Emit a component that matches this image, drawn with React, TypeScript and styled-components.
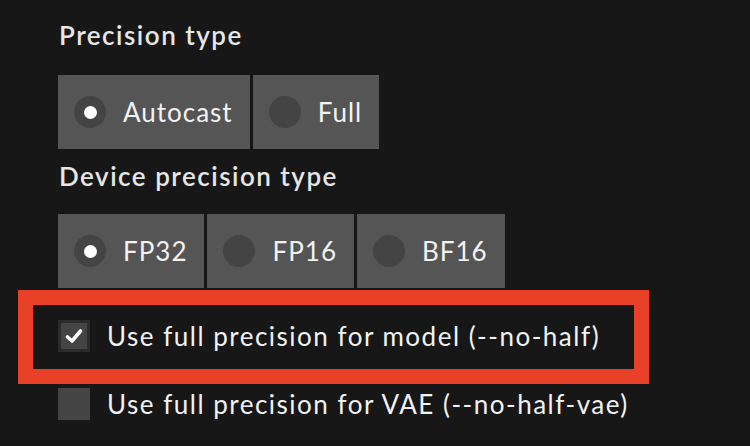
import React, { useState } from 'react';
import styled, { createGlobalStyle } from 'styled-components';

const GlobalStyle = createGlobalStyle`
  html, body {
    margin: 0;
    padding: 0;
    background: #171717;
  }
  body {
    font-family: 'Lato', 'Noto Sans', sans-serif;
    color: #eeeeee;
  }
`;

const Page = styled.div`
  width: 750px;
  height: 446px;
  box-sizing: border-box;
  padding: 17px 0 0 58px;
  overflow: hidden;
`;

const Heading = styled.h3<{ $first?: boolean }>`
  margin: ${p => (p.$first ? '0 0 22px' : '9px 0 20px')} 1px;
  font-size: 26px;
  line-height: 36px;
  font-weight: 600;
  letter-spacing: 1.5px;
  color: #e6e6e6;
`;

const Group = styled.div`
  display: flex;
  gap: 3px;
`;

const Option = styled.label`
  display: flex;
  align-items: center;
  gap: 17px;
  height: 74px;
  padding: 0 17px 0 16px;
  background: #555555;
  font-size: 26px;
  letter-spacing: 1px;
  color: #f2f2f2;
  cursor: pointer;
`;

const Radio = styled.span<{ $checked: boolean }>`
  position: relative;
  width: 32px;
  height: 32px;
  border-radius: 50%;
  background: #444444;
  flex-shrink: 0;

  &::after {
    content: '';
    display: ${p => (p.$checked ? 'block' : 'none')};
    position: absolute;
    top: 9.5px;
    left: 9.5px;
    width: 13px;
    height: 13px;
    border-radius: 50%;
    background: #ffffff;
  }
`;

const Highlight = styled.div`
  width: 631px;
  box-sizing: border-box;
  margin: 2px 0 0 -40px;
  padding: 15px 0 17px 25px;
  border: 15px solid #e84128;
`;

const CheckRow = styled.label<{ $indent?: boolean }>`
  display: flex;
  align-items: center;
  gap: 17px;
  height: 32px;
  margin-top: ${p => (p.$indent ? '4px' : '0')};
  font-size: 26px;
  letter-spacing: 1.5px;
  color: #f2f2f2;
  cursor: pointer;
`;

const Box = styled.span<{ $checked: boolean }>`
  display: flex;
  align-items: center;
  justify-content: center;
  width: 32px;
  height: 32px;
  box-sizing: border-box;
  flex-shrink: 0;
  background: #444444;
  border: ${p => (p.$checked ? '3px solid #2b2b2b' : 'none')};
`;

const Check = () => (
  <svg width="18" height="16" viewBox="0 0 18 16">
    <path d="M2.5 9 L7 13 L15.5 3" fill="none" stroke="#ffffff" strokeWidth="3.6" strokeLinecap="round" strokeLinejoin="round" />
  </svg>
);

const RadioGroup = ({ options, value, onChange }: { options: string[]; value: string; onChange: (v: string) => void }) => (
  <Group>
    {options.map(o => (
      <Option key={o} onClick={() => onChange(o)}>
        <Radio $checked={o === value} />
        {o}
      </Option>
    ))}
  </Group>
);

const App: React.FC = () => {
  const [precision, setPrecision] = useState('Autocast');
  const [device, setDevice] = useState('FP32');
  const [noHalf, setNoHalf] = useState(true);
  const [noHalfVae, setNoHalfVae] = useState(false);

  return (
    <>
      <GlobalStyle />
      <Page>
        <Heading $first>Precision type</Heading>
        <RadioGroup options={['Autocast', 'Full']} value={precision} onChange={setPrecision} />
        <Heading>Device precision type</Heading>
        <RadioGroup options={['FP32', 'FP16', 'BF16']} value={device} onChange={setDevice} />
        <Highlight>
          <CheckRow onClick={() => setNoHalf(!noHalf)}>
            <Box $checked={noHalf}>{noHalf && <Check />}</Box>
            Use full precision for model (--no-half)
          </CheckRow>
        </Highlight>
        <CheckRow $indent onClick={() => setNoHalfVae(!noHalfVae)}>
          <Box $checked={noHalfVae}>{noHalfVae && <Check />}</Box>
          Use full precision for VAE (--no-half-vae)
        </CheckRow>
      </Page>
    </>
  );
};

export default App;
